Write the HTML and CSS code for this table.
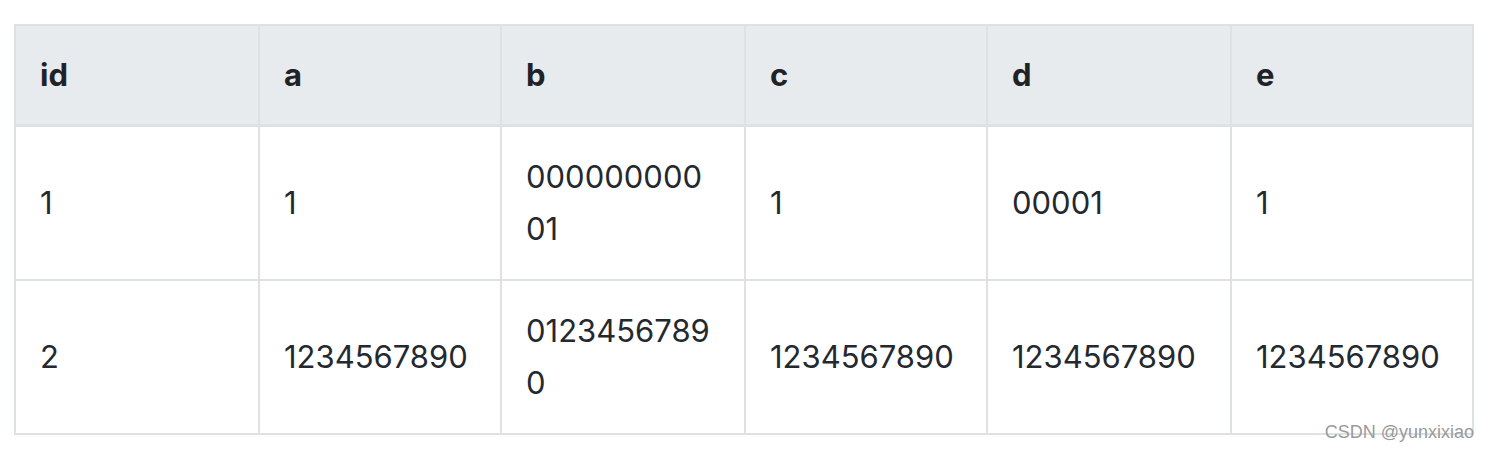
FILE: index.html
```html
<!DOCTYPE html>
<html>
<head>
<meta charset="utf-8">
<link rel="stylesheet" href="styles.css">
</head>
<body>
<div class="wrap">
  <table class="grid">
    <colgroup>
      <col class="c1"><col class="c2"><col class="c3"><col class="c4"><col class="c5"><col class="c6">
    </colgroup>
    <thead>
      <tr><th>id</th><th>a</th><th>b</th><th>c</th><th>d</th><th>e</th></tr>
    </thead>
    <tbody>
      <tr><td>1</td><td>1</td><td>00000000001</td><td>1</td><td>00001</td><td>1</td></tr>
      <tr><td>2</td><td>1234567890</td><td>01234567890</td><td>1234567890</td><td>1234567890</td><td>1234567890</td></tr>
    </tbody>
  </table>
</div>
<div class="mark">CSDN @yunxixiao</div>
</body>
</html>
```
FILE: styles.css
```css
html, body {
  margin: 0;
  padding: 0;
  background: #ffffff;
}
body {
  position: relative;
  width: 1490px;
  height: 452px;
}
.wrap {
  padding: 24px 16px 0 14px;
}
.grid {
  border-collapse: collapse;
  table-layout: fixed;
  width: 1460px;
  font-family: Inter, "Noto Sans", sans-serif;
  font-size: 31px;
  line-height: 52px;
  color: #24292f;
}
.c1, .c3, .c5 { width: 244px; }
.c2, .c4 { width: 242px; }
.grid th, .grid td {
  border: 2px solid #dfe2e5;
  padding: 23px 24px;
  text-align: left;
  vertical-align: middle;
  word-break: break-all;
}
.grid th {
  background: #e8ebee;
  font-weight: 700;
  border-bottom-width: 3px;
  color: #1f2328;
}
.grid td {
  font-weight: 400;
  padding-top: 24px;
  padding-bottom: 24px;
}
.mark {
  position: absolute;
  right: 16px;
  top: 420px;
  z-index: 2;
  font-family: "Liberation Sans", Arial, sans-serif;
  font-size: 18px;
  color: #9a9a9a;
  line-height: 24px;
}
```
